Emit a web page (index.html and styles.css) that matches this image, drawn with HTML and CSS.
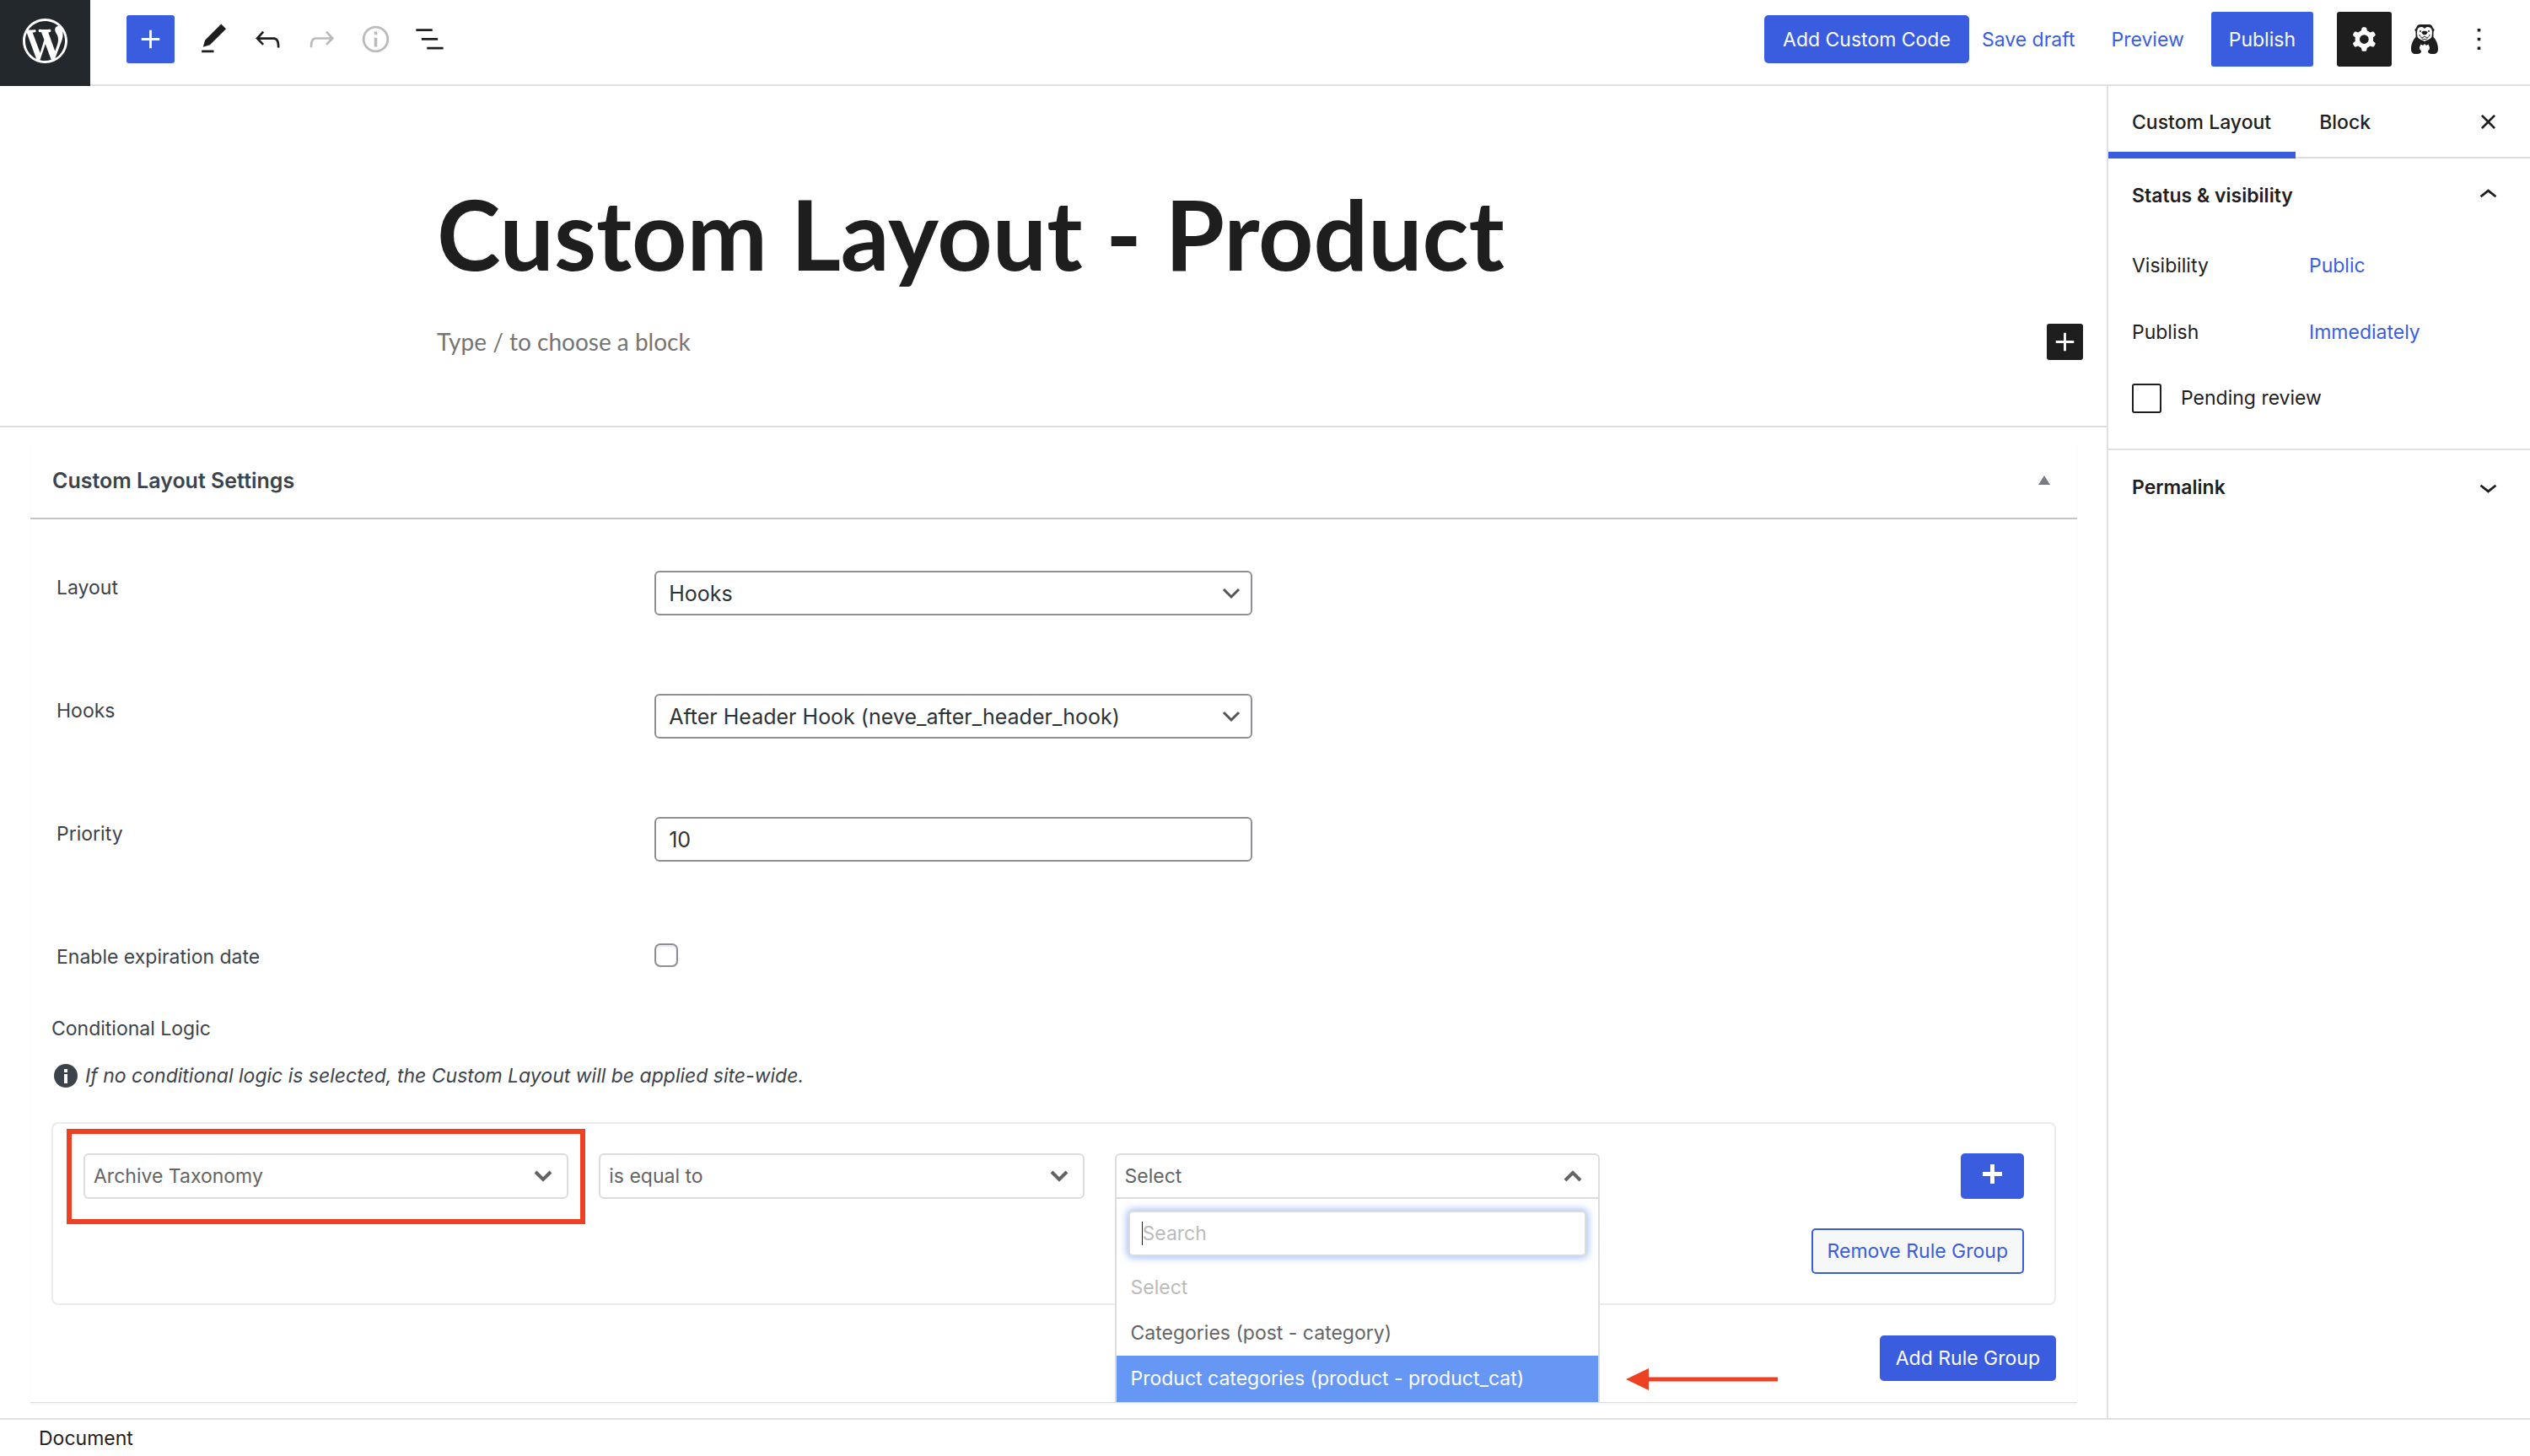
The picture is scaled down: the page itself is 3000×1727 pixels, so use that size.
FILE: index.html
```html
<!DOCTYPE html>
<html lang="en">
<head>
  <meta charset="utf-8">
  <title>Custom Layout - Product</title>
  <link rel="stylesheet" href="styles.css">
</head>
<body>

<header class="header">
  <a class="site-logo" href="#" aria-label="View posts">
    <svg viewBox="0 0 20 20"><path d="M20 10c0-5.51-4.49-10-10-10C4.48 0 0 4.49 0 10c0 5.52 4.48 10 10 10 5.51 0 10-4.48 10-10zM7.78 15.37L4.37 6.22c.55-.02 1.17-.08 1.17-.08.5-.06.44-1.13-.06-1.11 0 0-1.45.11-2.37.11-.18 0-.37 0-.58-.01C4.12 2.69 6.87 1.11 10 1.11c2.33 0 4.45.87 6.05 2.34-.68-.11-1.65.39-1.65 1.58 0 .74.45 1.36.9 2.1.35.61.55 1.36.55 2.46 0 1.49-1.4 5-1.4 5l-3.03-8.37c.54-.02.82-.17.82-.17.5-.05.44-1.25-.06-1.22 0 0-1.44.12-2.38.12-.87 0-2.33-.12-2.33-.12-.5-.03-.56 1.2-.06 1.22l.92.08 1.26 3.41zM17.41 10c.24-.64.74-1.87.43-4.25.7 1.29 1.05 2.71 1.05 4.25 0 3.29-1.73 6.24-4.4 7.78.97-2.59 1.94-5.2 2.92-7.78zM6.1 18.09C3.12 16.65 1.11 13.53 1.11 10c0-1.3.23-2.48.72-3.59C3.25 10.3 4.67 14.2 6.1 18.09zm4.03-6.63l2.58 6.98c-.86.29-1.76.45-2.71.45-.79 0-1.57-.11-2.29-.33.81-2.38 1.62-4.74 2.42-7.1z"/></svg>
  </a>
  <div class="tools">
    <button class="tool tool-inserter" type="button" aria-label="Add block">
      <svg class="icon" viewBox="0 0 24 24"><path d="M18 11.2h-5.2V6h-1.6v5.2H6v1.6h5.2V18h1.6v-5.2H18z"/></svg>
    </button>
    <button class="tool" type="button" aria-label="Tools">
      <svg class="icon" viewBox="0 0 24 24"><path d="M20.1 5.1L16.9 2 6.2 12.7l-1.3 4.4 4.5-1.3L20.1 5.1zM4 20.8h8v-1.5H4v1.5z"/></svg>
    </button>
    <button class="tool" type="button" aria-label="Undo">
      <svg class="icon" viewBox="0 0 24 24"><path d="M18.3 11.7c-.6-.6-1.4-.9-2.3-.9H6.7l2.9-3.3-1.1-1-4.5 5L8.5 16l1-1-2.7-2.7H16c.5 0 .9.2 1.3.5 1 1 1 3.4 1 4.5v.3h1.5v-.2c0-1.5 0-4.3-1.5-5.7z"/></svg>
    </button>
    <button class="tool tool-off" type="button" aria-label="Redo">
      <svg class="icon" viewBox="0 0 24 24"><path d="M15.6 6.5l-1.1 1 2.9 3.3H8c-.9 0-1.7.3-2.3.9-1.4 1.5-1.4 4.2-1.4 5.6v.2h1.5v-.3c0-1.1 0-3.5 1-4.5.3-.3.7-.5 1.3-.5h9.2L14.5 15l1.1 1.1 4.6-4.6-4.6-5z"/></svg>
    </button>
    <button class="tool tool-off" type="button" aria-label="Details">
      <svg class="icon" viewBox="0 0 24 24"><path d="M12 3.2c-4.8 0-8.8 3.9-8.8 8.8 0 4.8 3.9 8.8 8.8 8.8 4.8 0 8.8-3.9 8.8-8.8 0-4.8-4-8.8-8.8-8.8zm0 16c-4 0-7.2-3.3-7.2-7.2C4.8 8 8 4.8 12 4.8s7.2 3.3 7.2 7.2c0 4-3.2 7.2-7.2 7.2zM11 17h2v-6h-2v6zm0-8h2V7h-2v2z"/></svg>
    </button>
    <button class="tool" type="button" aria-label="List view">
      <svg class="icon" viewBox="0 0 24 24"><path d="M13.8 5.2H3v1.5h10.8V5.2zm-3.6 12v1.5H21v-1.5H10.2zm7.2-6H6.6v1.5h10.8v-1.5z"/></svg>
    </button>
  </div>
  <div class="actions">
    <button class="btn btn-primary" type="button">Add Custom Code</button>
    <button class="btn btn-link" type="button">Save draft</button>
    <button class="btn btn-link btn-preview" type="button">Preview</button>
    <button class="btn btn-primary btn-publish" type="button">Publish</button>
    <button class="tool tool-active" type="button" aria-label="Settings">
      <svg class="icon" viewBox="0 0 24 24"><path fill-rule="evenodd" d="M10.289 4.836A1 1 0 0111.275 4h1.306a1 1 0 01.987.836l.244 1.466c.787.26 1.503.679 2.108 1.218l1.393-.522a1 1 0 011.216.437l.653 1.13a1 1 0 01-.23 1.273l-1.148.944a6.025 6.025 0 010 2.435l1.149.946a1 1 0 01.23 1.272l-.653 1.13a1 1 0 01-1.216.437l-1.394-.522c-.605.54-1.32.958-2.108 1.218l-.244 1.466a1 1 0 01-.987.836h-1.306a1 1 0 01-.986-.836l-.244-1.466a5.995 5.995 0 01-2.108-1.218l-1.394.522a1 1 0 01-1.217-.436l-.653-1.131a1 1 0 01.23-1.272l1.149-.946a6.026 6.026 0 010-2.435l-1.148-.944a1 1 0 01-.23-1.272l.653-1.131a1 1 0 011.217-.437l1.393.522a5.994 5.994 0 012.108-1.218l.244-1.466zM14.929 12a3 3 0 11-6 0 3 3 0 016 0z"/></svg>
    </button>
    <button class="tool" type="button" aria-label="Otter">
      <svg class="icon-otter" viewBox="0 0 32 35">
        <path d="M11 0h10c3 0 4.500 2 5 4.500 2 .5 2 3 .5 4V15c3 3 5.500 8 5.500 14 0 4-2 6-5.500 6s-6.500-.5-6.500-3c0-1.500 2-2 2-3.500 0-2-1-3.500-1.500-5L18 25l-2-2-2 2-2.500-1.500C11 25 10 26.500 10 28.500c0 1.500 2 2 2 3.500 0 2.500-3 3-6.500 3S0 33 0 29c0-6 2.500-11 5.500-14V8.500c-1.500-1-1.500-3.500.5-4C6.500 2 8 0 11 0z"/>
        <path fill="#fff" d="M16 5c-2-3-6.500-2.500-8 0-1.500 3-1 8 0 10.500 2 2.500 6 3 8 4.500 2-1.500 6-2 8-4.500 1-2.500 1.500-7.500 0-10.500-1.500-2.500-6-3-8 0z"/>
        <path d="M12.500 9.500c0-2.500 7-2.500 7 0 0 1.500-2.500 3-3.500 3s-3.500-1.500-3.500-3z"/>
        <circle cx="11" cy="8" r="1"/><circle cx="21" cy="8" r="1"/>
        <path fill="none" stroke="#1e1e1e" d="M10 12c0 3.500 4 4.500 6 2 2 2.500 6 1.500 6-2M12.500 16.500c2 1.500 5 1.500 7 0"/>
      </svg>
    </button>
    <button class="tool" type="button" aria-label="Options">
      <svg class="icon" viewBox="0 0 24 24"><path d="M13 19h-2v-2h2v2zm0-6h-2v-2h2v2zm0-6h-2V5h2v2z"/></svg>
    </button>
  </div>
</header>

<div class="workspace">
  <main class="content">
    <section class="canvas">
      <h1 class="post-title">Custom Layout - Product</h1>
      <p class="post-prompt">Type / to choose a block</p>
      <button class="canvas-add" type="button" aria-label="Add block">
        <svg class="icon" viewBox="0 0 24 24"><path d="M18 11.2h-5.2V6h-1.6v5.2H6v1.6h5.2V18h1.6v-5.2H18z"/></svg>
      </button>
    </section>

    <section class="metabox">
      <div class="metabox-head">
        <h2>Custom Layout Settings</h2>
        <button class="toggle" type="button" aria-label="Toggle panel"><svg viewBox="0 0 14 11"><path d="M7 0l7 11H0z"/></svg></button>
      </div>

      <div class="fields">
        <div class="field">
          <label for="layout">Layout</label>
          <div class="select">
            <select id="layout"><option>Hooks</option></select>
            <svg class="caret" viewBox="0 0 22 14"><path d="M2 2l9 9 9-9"/></svg>
          </div>
        </div>
        <div class="field">
          <label for="hooks">Hooks</label>
          <div class="select">
            <select id="hooks"><option>After Header Hook (neve_after_header_hook)</option></select>
            <svg class="caret" viewBox="0 0 22 14"><path d="M2 2l9 9 9-9"/></svg>
          </div>
        </div>
        <div class="field">
          <label for="priority">Priority</label>
          <input id="priority" class="text-input" type="text" value="10">
        </div>
        <div class="field field-check">
          <label for="expiration">Enable expiration date</label>
          <input id="expiration" class="check" type="checkbox">
        </div>
      </div>

      <div class="logic">
        <h3>Conditional Logic</h3>
        <p class="hint">
          <svg viewBox="0 0 28 28"><circle cx="14" cy="14" r="14"/><path fill="#fff" d="M12 12h4v11h-4zM12 6h4v4h-4z"/></svg>
          <em>If no conditional logic is selected, the Custom Layout will be applied site-wide.</em>
        </p>

        <div class="rule-group">
          <div class="rule">
            <div class="select select-rule highlighted">
              <select aria-label="Condition"><option>Archive Taxonomy</option></select>
              <svg class="caret" viewBox="0 0 22 14"><path d="M2 2l9 9 9-9"/></svg>
            </div>
            <div class="select select-rule">
              <select aria-label="Operator"><option>is equal to</option></select>
              <svg class="caret" viewBox="0 0 22 14"><path d="M2 2l9 9 9-9"/></svg>
            </div>
            <div class="dropdown">
              <button class="dropdown-toggle" type="button" aria-expanded="true">
                Select
                <svg class="caret" viewBox="0 0 22 14"><path d="M2 12l9-9 9 9"/></svg>
              </button>
              <div class="dropdown-menu">
                <div class="search">
                  <input type="text" placeholder="Search" aria-label="Search">
                  <span class="cursor"></span>
                </div>
                <ul>
                  <li class="muted">Select</li>
                  <li>Categories (post - category)</li>
                  <li class="current">Product categories (product - product_cat)</li>
                </ul>
                <svg class="pointer" viewBox="0 0 180 28"><path d="M0 14L27 1v10.500h153v5H27V27z"/></svg>
              </div>
            </div>
            <button class="btn btn-primary btn-plus" type="button" aria-label="Add rule"><svg viewBox="0 0 24 24"><path d="M9 0h5v9h9v5h-9v9H9v-9H0V9h9z"/></svg></button>
          </div>
          <button class="btn btn-outline" type="button">Remove Rule Group</button>
        </div>
        <button class="btn btn-primary btn-add-group" type="button">Add Rule Group</button>
      </div>
    </section>
  </main>

  <aside class="sidebar">
    <div class="tabs">
      <button class="tab tab-active" type="button">Custom Layout</button>
      <button class="tab" type="button">Block</button>
      <button class="tab-close" type="button" aria-label="Close settings">
        <svg class="icon" viewBox="0 0 24 24"><path d="M12 13.06l3.712 3.713 1.061-1.06L13.061 12l3.712-3.712-1.06-1.06L12 10.938 8.288 7.227l-1.061 1.06L10.939 12l-3.712 3.712 1.06 1.061L12 13.061z"/></svg>
      </button>
    </div>
    <section class="panel">
      <button class="panel-title" type="button">
        Status &amp; visibility
        <svg class="icon" viewBox="0 0 24 24"><path d="M6.500 12.400L12 8l5.500 4.400-.9 1.200L12 10l-4.500 3.600-1-1.200z"/></svg>
      </button>
      <div class="panel-row"><span>Visibility</span><a href="#">Public</a></div>
      <div class="panel-row"><span>Publish</span><a href="#">Immediately</a></div>
      <div class="panel-check">
        <input id="pending" class="check-lg" type="checkbox">
        <label for="pending">Pending review</label>
      </div>
    </section>
    <section class="panel">
      <button class="panel-title" type="button">
        Permalink
        <svg class="icon" viewBox="0 0 24 24"><path d="M17.500 11.600L12 16l-5.500-4.400.9-1.200L12 14l4.500-3.600 1 1.200z"/></svg>
      </button>
    </section>
  </aside>
</div>

<footer class="footer">Document</footer>

</body>
</html>
```
FILE: styles.css
```css
* {
  box-sizing: border-box;
}

body {
  margin: 0;
  min-height: 100vh;
  display: flex;
  flex-direction: column;
  background: #fff;
  color: #1e1e1e;
  font: 23px/32px Inter, sans-serif;
}

button, input, select {
  font: inherit;
  color: inherit;
}

button {
  padding: 0;
  border: 0;
  background: none;
  cursor: pointer;
}

a {
  color: #3a5de0;
  text-decoration: none;
}

h1, h2, h3, p, ul {
  margin: 0;
  padding: 0;
}

svg {
  display: block;
  fill: currentColor;
}

.icon {
  width: 43px;
  height: 43px;
}

/* header */
.header {
  display: flex;
  align-items: flex-start;
  height: 102px;
  border-bottom: 2px solid #e0e0e0;
}

.site-logo {
  display: flex;
  align-items: center;
  justify-content: center;
  width: 107px;
  height: 102px;
  padding-bottom: 6px;
  background: #23282d;
  color: #fff;
}

.site-logo svg {
  width: 53px;
  height: 53px;
}

.tools, .actions {
  display: flex;
  align-items: center;
  height: 93px;
}

.tools {
  padding-left: 43px;
}

.actions {
  margin-left: auto;
  padding-right: 29px;
}

.tool {
  display: flex;
  align-items: center;
  justify-content: center;
  width: 64px;
  height: 64px;
  border-radius: 3px;
}

.tool-inserter {
  width: 57px;
  height: 57px;
  margin-right: 14px;
  background: #3a5de0;
  color: #fff;
}

.tool-off {
  color: #bbb;
}

.tool-active {
  width: 65px;
  height: 65px;
  margin: 0 7px 0 28px;
  background: #1e1e1e;
  color: #fff;
}

.icon-otter {
  width: 32px;
  height: 35px;
}

.btn {
  height: 54px;
  padding: 0 19px;
  border-radius: 5px;
  white-space: nowrap;
}

.btn-primary {
  background: #3a5de0;
  color: #fff;
}

.actions .btn {
  height: 57px;
  padding: 0 22px;
}

.actions .btn-link {
  padding: 0 15px;
  color: #3a5de0;
}

.actions .btn-preview {
  padding: 0 32px 0 28px;
}

.actions .btn-publish {
  height: 65px;
  padding: 0 21px;
  border-radius: 3px;
}

/* main area */
.workspace {
  flex: 1;
  display: flex;
}

.content {
  flex: 1;
  min-width: 0;
}

.canvas {
  display: grid;
  grid-template-columns: 1fr 1462px 1fr;
  align-items: center;
  row-gap: 34px;
  padding: 103px 0 77px;
  border-bottom: 2px solid #ddd;
}

.post-title {
  grid-column: 2;
  font: bold 114px/144px Lato, sans-serif;
}

.post-prompt {
  grid-column: 2;
  color: #757575;
  font: 28px/45px Lato, sans-serif;
}

.canvas-add {
  justify-self: end;
  margin-right: 28px;
  border-radius: 3px;
  background: #1e1e1e;
  color: #fff;
}

/* metabox */
.metabox {
  margin: 18px 35px 18px 36px;
  border-bottom: 1px solid #dcdcde;
  box-shadow: 0 2px 2px rgba(0, 0, 0, 0.04);
  color: #3c434a;
}

.metabox-head {
  display: flex;
  align-items: center;
  justify-content: space-between;
  height: 91px;
  padding: 0 32px 0 26px;
  border-bottom: 2px solid #c3c4c7;
}

.metabox-head h2 {
  font-size: 25px;
  font-weight: 600;
}

.toggle svg {
  width: 14px;
  height: 11px;
  fill: #787c82;
}

.fields {
  padding: 61px 32px 0 31px;
}

.field {
  display: grid;
  grid-template-columns: 30% 30% 1fr;
  align-items: start;
  height: 146px;
}

.field label {
  padding-top: 4px;
}

.field-check {
  height: 89px;
}

.select {
  display: grid;
  align-items: center;
}

.select select,
.select .caret {
  grid-area: 1 / 1;
}

.select select,
.text-input {
  width: 100%;
  height: 53px;
  padding: 0 15px;
  border: 2px solid #8c8f94;
  border-radius: 6px;
  background: #fff;
  color: #2c3338;
  font-size: 25px;
  appearance: none;
}

.caret {
  justify-self: end;
  width: 22px;
  height: 14px;
  margin-right: 14px;
  fill: none;
  stroke: #555;
  stroke-width: 3;
  pointer-events: none;
}

.check {
  appearance: none;
  width: 28px;
  height: 28px;
  margin: 4px 0;
  border: 2px solid #8c8f94;
  border-radius: 7px;
  box-shadow: inset 0 2px 3px rgba(0, 0, 0, 0.1);
}

/* conditional logic */
.logic {
  padding: 0 25px 25px;
}

.logic h3 {
  font-size: 23px;
  font-weight: 400;
}

.hint {
  display: flex;
  align-items: center;
  gap: 9px;
  padding: 24px 3px 39px;
}

.hint svg {
  width: 28px;
  height: 28px;
}

.rule-group {
  display: flex;
  flex-direction: column;
  align-items: flex-end;
  gap: 35px;
  margin-bottom: 36px;
  padding: 35px 36px;
  border: 2px solid #ebebeb;
  border-radius: 8px;
}

.rule {
  display: grid;
  grid-template-columns: repeat(3, 25%) 1fr;
  column-gap: 36px;
  width: 100%;
}

.select-rule select {
  height: 54px;
  padding: 0 10px;
  border-color: #dcdcde;
  color: #646464;
  font-size: 23px;
}

.select-rule .caret,
.dropdown .caret {
  margin-right: 19px;
  stroke: #646464;
  stroke-width: 4;
}

/* red frame drawn around the select */
.highlighted {
  position: relative;
}

.highlighted::after {
  content: "";
  position: absolute;
  inset: -29px -20px -30px -20px;
  border: 6px solid #ee4023;
  pointer-events: none;
}

.dropdown {
  position: relative;
  color: #646464;
}

.dropdown-toggle {
  display: flex;
  align-items: center;
  justify-content: space-between;
  width: 100%;
  height: 54px;
  padding: 0 0 0 10px;
  border: 2px solid #dcdcde;
  border-radius: 6px 6px 0 0;
}

.dropdown-menu {
  position: absolute;
  top: 54px;
  left: 0;
  right: 0;
  border: solid #dcdcde;
  border-width: 0 2px;
  background: #fff;
}

.search {
  display: grid;
  align-items: center;
  margin: 14px 14px 10px;
}

.search input,
.cursor {
  grid-area: 1 / 1;
}

.search input {
  width: 100%;
  height: 54px;
  padding: 0 15px;
  border: 2px solid #dcdcde;
  border-radius: 5px;
  outline: 0;
  box-shadow: 0 0 8px 2px rgba(70, 130, 250, 0.5);
}

.search input::placeholder {
  color: #bbb;
}

.cursor {
  width: 1px;
  height: 28px;
  margin-left: 16px;
  background: #1e1e1e;
}

.dropdown-menu ul {
  list-style: none;
}

.dropdown-menu li {
  padding: 11px 17px;
}

.dropdown-menu .muted {
  color: #bbb;
}

.dropdown-menu .current {
  padding-bottom: 12px;
  background: #6697f4;
  color: #fff;
}

/* red arrow beside the highlighted option */
.pointer {
  position: absolute;
  left: 100%;
  bottom: 13px;
  width: 180px;
  height: 28px;
  margin-left: 33px;
  fill: #ee4023;
}

.btn-plus {
  display: flex;
  justify-content: center;
  justify-self: end;
  width: 75px;
  padding: 13px 0 0;
}

.btn-plus svg {
  width: 24px;
  height: 24px;
}

.btn-outline {
  padding: 0 17px;
  border: 2px solid #3a5de0;
  background: #f6f7f7;
  color: #3a5de0;
}

.btn-add-group {
  display: block;
  margin-left: auto;
}

/* sidebar */
.sidebar {
  width: 502px;
  border-left: 2px solid #e0e0e0;
}

.tabs {
  display: flex;
  height: 86px;
  border-bottom: 2px solid #ddd;
}

.tab {
  height: 86px;
  padding: 0 29px 0 28px;
  font-weight: 500;
}

.tab-active {
  box-shadow: inset 0 -8px #3a5de0;
}

.tab-close {
  margin: 0 28px 0 auto;
}

.panel {
  padding: 0 28px 21px;
  border-bottom: 2px solid #e0e0e0;
}

.panel:last-child {
  border-bottom: 0;
}

.panel-title {
  display: flex;
  align-items: center;
  justify-content: space-between;
  width: 100%;
  height: 87px;
  font-weight: 600;
}

.panel-row {
  display: grid;
  grid-template-columns: 210px 1fr;
  align-items: center;
  height: 79px;
}

.panel-check {
  display: flex;
  align-items: center;
  gap: 23px;
  height: 78px;
}

.check-lg {
  appearance: none;
  width: 35px;
  height: 35px;
  margin: 0;
  border: 2px solid #1e1e1e;
  border-radius: 3px;
}

.footer {
  height: 45px;
  padding: 6px 46px;
  border-top: 2px solid #e0e0e0;
}
```
